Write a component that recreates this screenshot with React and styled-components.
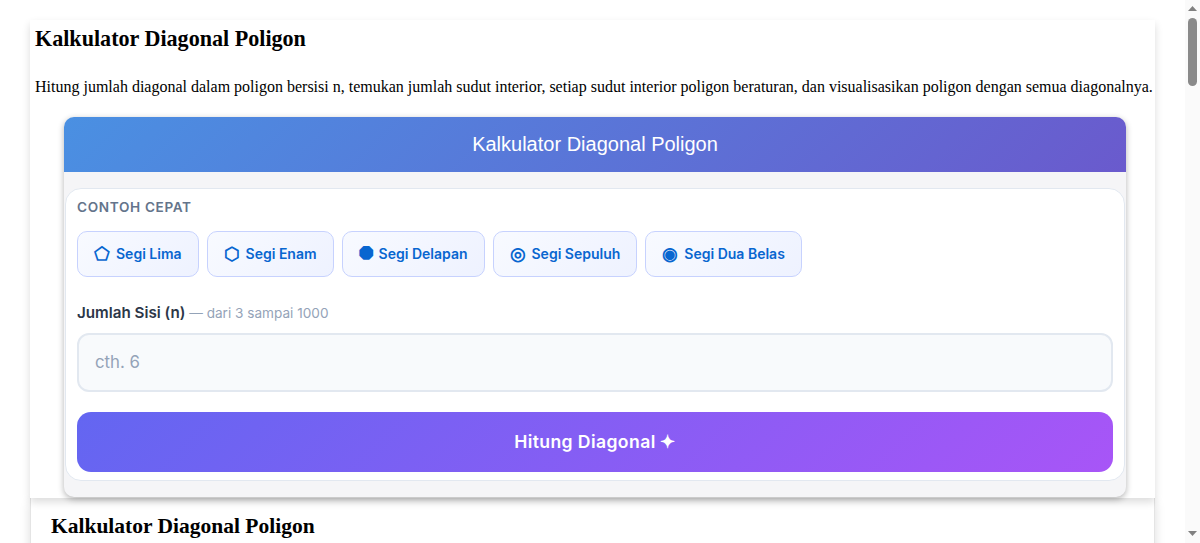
import React from "react";
import styled, { createGlobalStyle } from "styled-components";

const Global = createGlobalStyle`
  html, body { margin: 0; padding: 0; background: #fff; }
  html { scrollbar-width: none; }
  body { font-family: "Liberation Serif", serif; color: #000; }
`;
const Page = styled.div`
  padding-top: 20px;
`;
const Section = styled.section`
  width: 1125px;
  margin: 0 auto 0 30px;
  box-sizing: border-box;
  padding: 5px 0 1px 5px;
  background: #fff;
  box-shadow: 0 4px 8px rgba(0, 0, 0, 0.14);
  position: relative;
  z-index: 1;
`;
const LowerSection = styled.section`
  width: 1125px;
  margin: 0 auto 0 30px;
  box-sizing: border-box;
  padding: 16px 0 0 20px;
  min-height: 3600px;
  background: #fff;
  border: 1px solid #e4e4e4;
  border-top: 0;
  box-shadow: 0 4px 10px rgba(0, 0, 0, 0.14);
`;
const Heading = styled.h2`
  font-size: 22.1px;
  line-height: 27px;
  font-weight: 700;
  margin: 0 0 25px;
  color: #000;
`;
const LowerHeading = styled.h3`
  font-size: 21.5px;
  line-height: 24px;
  font-weight: 700;
  margin: 0;
`;
const Intro = styled.p`
  font-size: 16px;
  line-height: 20px;
  margin: 0 0 20px;
  white-space: nowrap;
`;
const Card = styled.div`
  width: 1062px;
  margin: 0 0 0 29px;
  border-radius: 10px;
  overflow: hidden;
  background: #f5f5f7;
  box-shadow: 0 2px 6px rgba(0, 0, 0, 0.3);
  padding-bottom: 16px;
`;
const CardHeader = styled.div`
  height: 55px;
  display: flex;
  align-items: center;
  justify-content: center;
  background: linear-gradient(135deg, #4a90e2, #6a5acd);
  color: #fff;
  font: 400 20px "Liberation Sans", sans-serif;
  margin-bottom: 16px;
`;
const Panel = styled.div`
  margin: 0 1px;
  box-sizing: border-box;
  height: 293px;
  padding: 10px 11px 0;
  background: #fff;
  border: 1px solid #e2e8f0;
  border-radius: 16px;
  font-family: Inter, sans-serif;
`;
const Eyebrow = styled.div`
  font-size: 13.6px;
  line-height: 16px;
  font-weight: 600;
  letter-spacing: 0.65px;
  color: #64748b;
  text-transform: uppercase;
  margin-bottom: 16px;
`;
const Chips = styled.div`
  display: flex;
  gap: 8px;
  margin-bottom: 26px;
`;
const Chip = styled.button`
  height: 46px;
  box-sizing: border-box;
  padding: 0 16px;
  display: flex;
  align-items: center;
  gap: 6px;
  border: 1px solid #c7d2fe;
  border-radius: 10px;
  background: linear-gradient(135deg, #f8faff, #eef2ff);
  color: #0866d0;
  font: 600 14px/18px Inter, sans-serif;
  white-space: nowrap;
`;
const ChipIcon = styled.span`
  font-size: 17.6px;
  line-height: 18px;
`;
const Label = styled.label`
  display: block;
  font-size: 15.2px;
  line-height: 19px;
  font-weight: 600;
  color: #2d3748;
  margin-bottom: 10px;
`;
const Hint = styled.span`
  font-size: 13.6px;
  font-weight: 400;
  color: #94a3b8;
`;
const Input = styled.input`
  display: block;
  width: 100%;
  height: 59px;
  box-sizing: border-box;
  padding: 0 16px 2px;
  border: 2px solid #e2e8f0;
  border-radius: 12px;
  background: #f8fafc;
  font: 400 16.8px Inter, sans-serif;
  margin-bottom: 20px;
  &::placeholder { color: #94a3b8; opacity: 1; }
`;
const Submit = styled.button`
  display: block;
  width: 100%;
  height: 60px;
  padding: 0 0 2px;
  border: 0;
  border-radius: 14px;
  background: linear-gradient(135deg, #6366f1, #a855f7);
  color: #fff;
  font: 600 17.6px Inter, sans-serif;
  letter-spacing: 0.4px;
`;
const Scrollbar = styled.div`
  position: fixed;
  top: 0;
  right: 0;
  bottom: 0;
  width: 15px;
  z-index: 5;
  background: #fafafa;
`;
const Thumb = styled.div`
  position: absolute;
  top: 18px;
  left: 3px;
  width: 9px;
  height: 68px;
  border-radius: 5px;
  background: #8a8a8a;
`;
const ArrowIcon = styled.svg`
  position: absolute;
  left: 3px;
  width: 9px;
  height: 5px;
  fill: #808080;
  top: ${(p) => (p.$down ? "531px" : "6px")};
`;

const examples = [
  ["⬠", "Segi Lima"],
  ["⬡", "Segi Enam"],
  ["⯃", "Segi Delapan"],
  ["◎", "Segi Sepuluh"],
  ["◉", "Segi Dua Belas"],
];

export default function App() {
  return (
    <Page>
      <Global />
      <Section>
        <Heading>Kalkulator Diagonal Poligon</Heading>
        <Intro>
          Hitung jumlah diagonal dalam poligon bersisi n, temukan jumlah sudut interior, setiap sudut interior poligon beraturan, dan visualisasikan poligon dengan semua diagonalnya.
        </Intro>
        <Card>
          <CardHeader>Kalkulator Diagonal Poligon</CardHeader>
          <Panel>
            <Eyebrow>Contoh Cepat</Eyebrow>
            <Chips>
              {examples.map(([icon, name]) => (
                <Chip key={name} type="button">
                  <ChipIcon>{icon}</ChipIcon>
                  {name}
                </Chip>
              ))}
            </Chips>
            <Label>
              Jumlah Sisi (n) <Hint>— dari 3 sampai 1000</Hint>
            </Label>
            <Input placeholder="cth. 6" />
            <Submit type="button">Hitung Diagonal ✦</Submit>
          </Panel>
        </Card>
      </Section>
      <LowerSection>
        <LowerHeading>Kalkulator Diagonal Poligon</LowerHeading>
      </LowerSection>
      <Scrollbar>
        <ArrowIcon viewBox="0 0 9 5"><polygon points="4.5,0 9,5 0,5" /></ArrowIcon>
        <Thumb />
        <ArrowIcon $down viewBox="0 0 9 5"><polygon points="0,0 9,0 4.5,5" /></ArrowIcon>
      </Scrollbar>
    </Page>
  );
}
